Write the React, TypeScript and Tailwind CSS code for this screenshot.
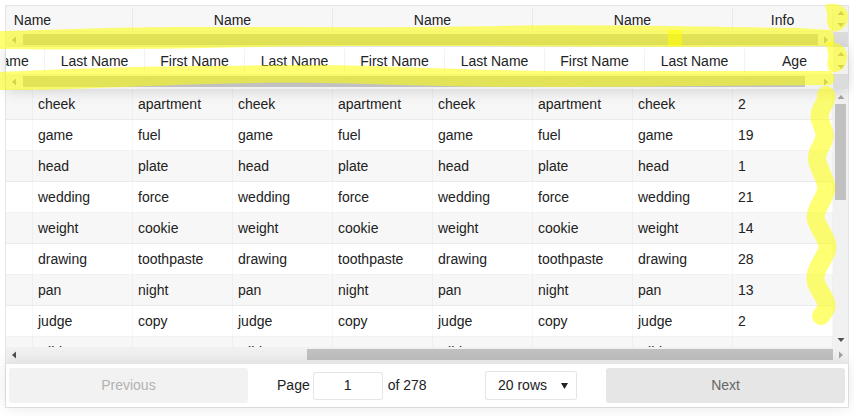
import React from "react";

const GROUPS = [
  { label: "Name", w: "w-[200px]" },
  { label: "Name", w: "w-[200px]" },
  { label: "Name", w: "w-[200px]" },
  { label: "Name", w: "w-[200px]" },
  { label: "Info", w: "w-[100px]" },
];

const COLS = [
  "First Name",
  "Last Name",
  "First Name",
  "Last Name",
  "First Name",
  "Last Name",
  "First Name",
  "Last Name",
  "Age",
];

// [lastName, firstName, age]
const ROWS = [
  ["cheek", "apartment", "2"],
  ["game", "fuel", "19"],
  ["head", "plate", "1"],
  ["wedding", "force", "21"],
  ["weight", "cookie", "14"],
  ["drawing", "toothpaste", "28"],
  ["pan", "night", "13"],
  ["judge", "copy", "2"],
  ["wild", "ocean", "7"],
];

function Tri({ dir, dark }: { dir: "up" | "down" | "left" | "right"; dark?: boolean }) {
  const pts = {
    up: "4,2 7.5,6 0.5,6",
    down: "0.5,2 7.5,2 4,6",
    left: "2,4 6,0.5 6,7.5",
    right: "2,0.5 6,4 2,7.5",
  }[dir];
  return (
    <svg width="8" height="8" viewBox="0 0 8 8">
      <polygon points={pts} fill={dark ? "#505050" : "#a3a3a3"} />
    </svg>
  );
}

function HScroll({ width, gap, thumb, leftDark, rightDark }: any) {
  return (
    <div className={`${width} h-[15px] bg-[#f1f1f1] flex shrink-0`}>
      <div className="w-[15px] h-full flex items-center justify-center">
        <Tri dir="left" dark={leftDark} />
      </div>
      <div className="flex-1 flex items-center">
        <div className={`${gap} shrink-0`} />
        <div className={`${thumb} h-[11px] bg-[#c1c1c1]`} />
      </div>
      <div className="w-[15px] h-full flex items-center justify-center">
        <Tri dir="right" dark={rightDark} />
      </div>
    </div>
  );
}

function MiniV({ h }: { h: string }) {
  return (
    <div className={`w-[15px] ${h} bg-[#f1f1f1] flex flex-col items-center justify-between py-[3px]`}>
      <Tri dir="up" />
      <Tri dir="down" />
    </div>
  );
}

function Highlights() {
  return (
    <svg className="absolute inset-0 z-30 pointer-events-none" width="854" height="417" viewBox="0 0 854 417">
      <g fill="#ffff00" fillOpacity="0.55" stroke="none">
        <path d="M0 31 C60 30 100 27 200 27 S400 28 500 26 S700 27 800 28 L830 30 C836 34 836 44 830 46 L700 47 C600 47 500 46 400 46 S250 47 200 48 S60 50 0 49 Z" />
        <path d="M0 72 C50 70 100 67 200 66 S320 64 400 67 S560 72 650 71 L830 71 C836 74 836 83 830 85 L700 86 C600 87 500 88 400 85 S250 82 150 86 S40 90 0 90 Z" />
        <path d="M828 4 C840 3 848 8 848 16 S846 28 838 31 S826 26 827 17 S822 6 828 4 Z" />
        <path d="M830 42 C842 42 848 50 847 58 S844 70 836 72 S826 66 828 58 S822 44 830 42 Z" />
        <path d="M668 30 L682 30 L682 46 L668 46 Z" />
      </g>
      <path
        d="M826 95 C828 102 817 110 820 120 S828 134 821 146 S817 162 823 176 S826 192 819 206 S817 222 824 236 S826 252 819 266 S816 284 823 296 S825 310 821 316"
        fill="none"
        stroke="#ffff00"
        strokeOpacity="0.55"
        strokeWidth="18"
        strokeLinecap="round"
        strokeLinejoin="round"
      />
    </svg>
  );
}

export default function App() {
  return (
    <div className="relative w-[854px] h-[417px] bg-white font-['Liberation_Sans',Arial,sans-serif] text-[14px] text-[#222] overflow-hidden">
      <div className="absolute left-[5px] top-[5px] w-[844px] border border-[rgba(0,0,0,0.1)] flex flex-col">
        {/* --- HEADER GROUPS --- */}
        <div className="flex">
          <div className="w-[827px] flex flex-col">
            <div className="h-[26px] overflow-hidden bg-[#f7f7f7] border-b border-[rgba(0,0,0,0.05)]">
              <div className="flex ml-[-73px] h-full pt-[3px]">
                {GROUPS.map((g, i) => (
                  <div key={i} className={`${g.w} shrink-0 h-full flex items-center justify-center border-r border-[rgba(0,0,0,0.06)]`}>
                    {g.label}
                  </div>
                ))}
              </div>
            </div>
            <HScroll width="w-[827px]" gap="w-[2px]" thumb="flex-1" />
          </div>
          <div className="w-[15px] flex flex-col">
            <MiniV h="h-[26px]" />
            <div className="h-[15px] bg-[#dcdcdc]" />
          </div>
        </div>

        {/* --- COLUMN HEADERS --- */}
        <div className="flex relative z-10 bg-white shadow-[0_2px_15px_0_rgba(0,0,0,0.15)]">
          <div className="w-[827px] flex flex-col">
            <div className="h-[27px] overflow-hidden bg-white">
              <div className="flex ml-[-61px] h-full pt-[2px]">
                {COLS.map((c, i) => (
                  <div key={i} className="w-[100px] shrink-0 h-full flex items-center justify-center whitespace-nowrap border-r border-[rgba(0,0,0,0.05)]">
                    {c}
                  </div>
                ))}
              </div>
            </div>
            <HScroll width="w-[827px]" gap="w-[2px]" thumb="w-[782px]" />
          </div>
          <div className="w-[15px] flex flex-col">
            <MiniV h="h-[27px]" />
            <div className="h-[15px] bg-[#dcdcdc]" />
          </div>
        </div>

        {/* --- BODY --- */}
        <div className="flex h-[258px]">
          <div className="w-[827px] h-full overflow-hidden">
            {ROWS.map((r, ri) => {
              const [last, first, age] = r;
              const cells = [first, last, first, last, first, last, first, last, age];
              return (
                <div
                  key={ri}
                  className={`h-[31px] shrink-0 border-b border-[rgba(0,0,0,0.05)] overflow-hidden ${ri % 2 === 0 ? "bg-[#f7f7f7]" : "bg-white"}`}
                >
                  <div className="flex ml-[-73px] h-full">
                    {cells.map((c, ci) => (
                      <div key={ci} className="w-[100px] shrink-0 h-full flex items-center px-[5px] whitespace-nowrap border-r border-[rgba(0,0,0,0.03)]">
                        {c}
                      </div>
                    ))}
                  </div>
                </div>
              );
            })}
          </div>
          <div className="w-[15px] h-full bg-[#f1f1f1] flex flex-col">
            <div className="h-[15px] flex items-center justify-center">
              <Tri dir="up" />
            </div>
            <div className="flex-1 flex flex-col items-center">
              <div className="w-[11px] h-[96px] bg-[#c1c1c1]" />
            </div>
            <div className="h-[15px] flex items-center justify-center">
              <Tri dir="down" dark />
            </div>
          </div>
        </div>
        <HScroll width="w-[842px]" gap="w-[286px]" thumb="flex-1" leftDark />

        {/* --- PAGINATION --- */}
        <div className="flex items-stretch px-[3px] pt-[4px] pb-[4px] border-t-2 border-[rgba(0,0,0,0.1)] shadow-[0_0_15px_0_rgba(0,0,0,0.1)]">
          <div className="flex-[1] flex">
            <button className="w-full h-[35px] rounded-[3px] bg-[#f2f2f2] text-[#b3b3b3] text-[14px]">Previous</button>
          </div>
          <div className="flex-[1.5] flex items-center justify-around">
            <div className="flex items-center mx-[10px] whitespace-nowrap">
              <span>Page</span>
              <div className="ml-[3px] w-[70px] h-[28px] border border-[rgba(0,0,0,0.1)] rounded-[3px] bg-white flex items-center justify-center">
                1
              </div>
              <span className="ml-[5px]">of 278</span>
            </div>
            <div className="mx-[10px] w-[92px] h-[29px] border border-[rgba(0,0,0,0.1)] rounded-[3px] bg-white flex items-center pl-[12px] pr-[8px]">
              <span className="flex-1">20 rows</span>
              <svg width="7" height="6" viewBox="0 0 7 6">
                <polygon points="0,0 7,0 3.5,6" fill="#222" />
              </svg>
            </div>
          </div>
          <div className="flex-[1] flex">
            <button className="w-full h-[35px] rounded-[3px] bg-[#e6e6e6] text-[#666] text-[14px]">Next</button>
          </div>
        </div>
      </div>
      <Highlights />
    </div>
  );
}
